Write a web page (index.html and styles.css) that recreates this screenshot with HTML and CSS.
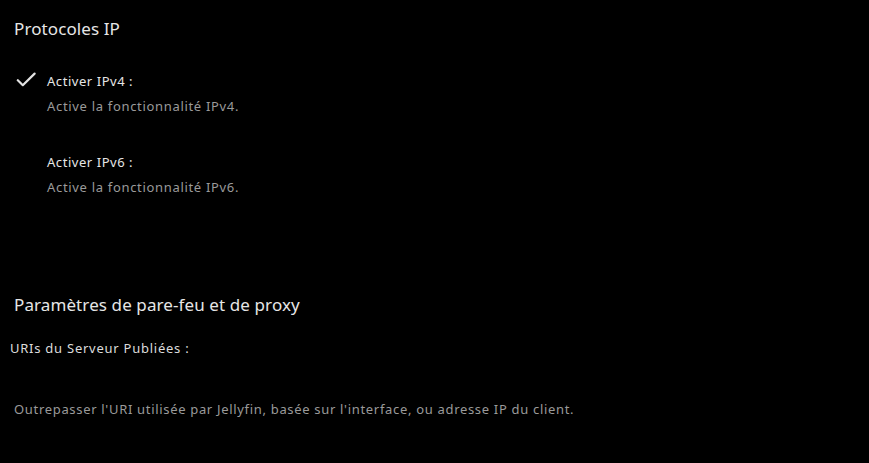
FILE: index.html
```html
<!DOCTYPE html>
<html lang="fr">
<head>
<meta charset="utf-8">
<link rel="stylesheet" href="styles.css">
</head>
<body>
<div class="page">
  <section class="section">
    <h2 class="section-title">Protocoles IP</h2>
    <div class="check-row">
      <svg class="check" viewBox="0 0 20 16" width="20" height="16"><polyline points="1.8,8.2 6.8,13.2 18.6,1.6" fill="none" stroke="#e2e2e2" stroke-width="2.2" stroke-linecap="round" stroke-linejoin="round"/></svg>
      <div class="check-text">
        <div class="check-label">Activer IPv4 :</div>
        <div class="field-desc">Active la fonctionnalité IPv4.</div>
      </div>
    </div>
    <div class="check-row">
      <span class="check-space"></span>
      <div class="check-text">
        <div class="check-label">Activer IPv6 :</div>
        <div class="field-desc">Active la fonctionnalité IPv6.</div>
      </div>
    </div>
  </section>
  <section class="section second">
    <h2 class="section-title">Paramètres de pare-feu et de proxy</h2>
    <div class="input-label">URIs du Serveur Publiées :</div>
    <div class="field-desc wide">Outrepasser l'URI utilisée par Jellyfin, basée sur l'interface, ou adresse IP du client.</div>
  </section>
</div>
</body>
</html>
```
FILE: styles.css
```css
html, body {
  margin: 0;
  padding: 0;
  background: #000;
  height: 100%;
}
body {
  font-family: "Noto Sans", sans-serif;
  color: #dcdcdc;
}
.page {
  padding: 0 14px;
}
.section-title {
  margin: 0;
  padding-top: 17px;
  font-size: 17px;
  font-weight: 400;
  line-height: 24px;
  letter-spacing: 0.1px;
  color: #e6e6e6;
}
.check-row {
  display: flex;
  align-items: flex-start;
  margin-top: 26px;
}
.check-row + .check-row {
  margin-top: 33px;
}
.check {
  width: 20px;
  height: 16px;
  margin-left: 2px;
  margin-top: 5px;
  flex: none;
}
.check-space {
  width: 20px;
  flex: none;
  margin-left: 2px;
}
.check-text {
  margin-left: 11px;
  padding-top: 2px;
}
.check-label {
  font-size: 13px;
  line-height: 24px;
  letter-spacing: 0.55px;
  color: #e6e6e6;
}
.field-desc {
  font-size: 13px;
  line-height: 18px;
  margin-top: 4px;
  letter-spacing: 0.68px;
  color: #9a9a9a;
}
.second {
  margin-top: 80px;
}
.input-label {
  font-size: 13px;
  margin-left: -4px;
  margin-top: 22px;
  letter-spacing: 0.75px;
  color: #dcdcdc;
}
.wide {
  margin-top: 43px;
}
```
